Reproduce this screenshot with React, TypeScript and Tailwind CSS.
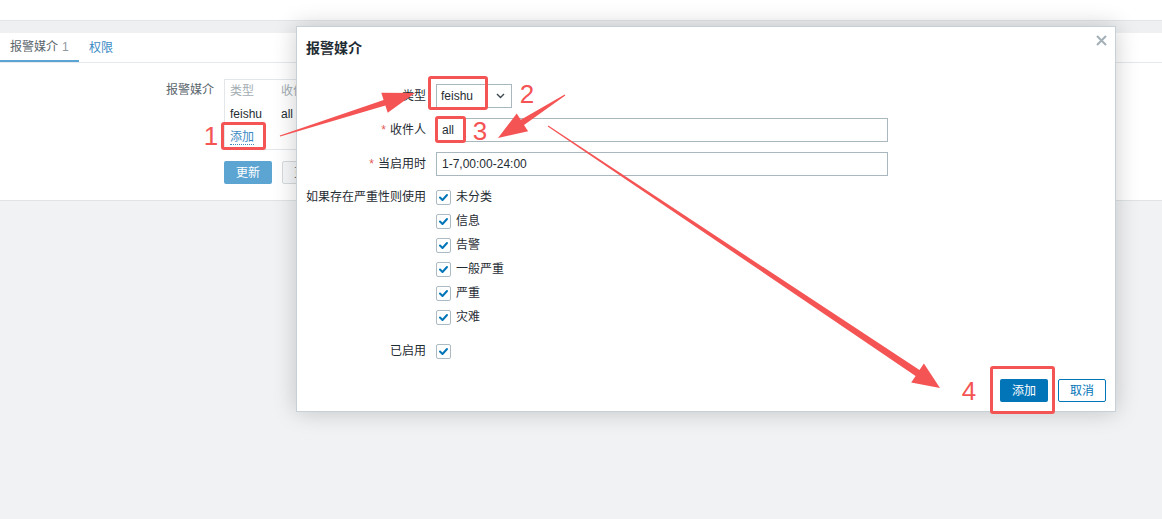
import React from 'react';

const RED = '#f55454';

// tapered arrow: thin tail, thick shaft near head, triangle head
function arrowPoints(x1: number, y1: number, x2: number, y2: number, w0: number, w1: number, headLen: number, headW: number) {
  const len = Math.hypot(x2 - x1, y2 - y1);
  const dx = (x2 - x1) / len;
  const dy = (y2 - y1) / len;
  const nx = -dy;
  const ny = dx;
  const bx = x2 - dx * headLen;
  const by = y2 - dy * headLen;
  const pts = [
    [x1 + (nx * w0) / 2, y1 + (ny * w0) / 2],
    [bx + (nx * w1) / 2, by + (ny * w1) / 2],
    [bx + (nx * headW) / 2, by + (ny * headW) / 2],
    [x2, y2],
    [bx - (nx * headW) / 2, by - (ny * headW) / 2],
    [bx - (nx * w1) / 2, by - (ny * w1) / 2],
    [x1 - (nx * w0) / 2, y1 - (ny * w0) / 2],
  ];
  return pts.map(p => `${p[0].toFixed(1)},${p[1].toFixed(1)}`).join(' ');
}

const CheckBox: React.FC = () => (
  <span className="flex h-[15px] w-[15px] items-center justify-center rounded-[2px] border border-[#acbbc3] bg-white">
    <svg width="11" height="11" viewBox="0 0 11 11" fill="none">
      <path d="M2 5.5 L4.5 8 L9 3" stroke="#0275b8" strokeWidth="2" strokeLinecap="round" strokeLinejoin="round" />
    </svg>
  </span>
);

const severities = ['未分类', '信息', '告警', '一般严重', '严重', '灾难'];

const Req: React.FC = () => <span className="mr-[4px] text-[#e45959]">*</span>;

const App: React.FC = () => {
  return (
    <div className="relative h-[519px] w-[1162px] overflow-hidden bg-[#f1f2f4] font-['Liberation_Sans','Noto_Sans_CJK_SC',sans-serif] text-[12px] text-[#1f2c33]">
      <div className="h-[21px] border-b border-[#e3e6e9] bg-white" />
      <div className="h-[12px] bg-[#eef0f2]" />

      {/* page card */}
      <div className="border-b border-[#dfe3e6] bg-white">
        <div className="flex h-[30px] border-b border-[#e6e9ec]">
          <div className="flex w-[79px] items-center border-b-2 border-[#5ba4d3] pl-[10px] text-[#5b666d]">
            报警媒介 <span className="ml-[4px] text-[#8f999f]">1</span>
          </div>
          <div className="flex items-center pl-[10px] text-[#3a8ac4]">权限</div>
        </div>
        <div className="flex pb-[16px] pt-[16px]">
          <div className="w-[214px] pt-[3px] text-right leading-[16px] text-[#5b666d]">报警媒介</div>
          <div className="ml-[10px]">
            <div className="h-[71px] w-[300px] border border-[#e3e7ea] pl-[5px]">
              <div className="flex h-[22px] items-center text-[#a3adb3]">
                <span className="w-[51px]">类型</span>
                <span>收件人</span>
              </div>
              <div className="flex h-[24px] items-center">
                <span className="w-[51px]">feishu</span>
                <span>all</span>
              </div>
              <div className="flex h-[22px] items-center">
                <span className="border-b border-dotted border-[#3a8ac4] leading-[14px] text-[#3a8ac4]">添加</span>
              </div>
            </div>
            <div className="mt-[11px] flex gap-[10px]">
              <button className="h-[23px] w-[48px] rounded-[2px] bg-[#5ca5d2] text-white">更新</button>
              <button className="h-[23px] w-[48px] rounded-[2px] border border-[#d5dadd] bg-[#f6f7f8] text-[#5b666d]">克隆</button>
            </div>
          </div>
        </div>
      </div>

      {/* dialog */}
      <div className="absolute left-[296px] top-[26px] flex h-[386px] w-[820px] flex-col border border-[#c7d0d6] bg-white shadow-[0_0_22px_rgba(0,0,0,0.2)]">
        <div className="relative pl-[9px] pt-[13px]">
          <div className="text-[14px] font-bold leading-[16px] text-[#1f2c33]">报警媒介</div>
          <button className="absolute right-[8px] top-[7px] flex h-[12px] w-[12px] items-center justify-center">
            <svg width="11" height="11" viewBox="0 0 11 11">
              <path d="M1 1 L10 10 M10 1 L1 10" stroke="#a3b0b7" strokeWidth="2" />
            </svg>
          </button>
        </div>

        <div className="mt-[28px] flex flex-col pl-[9px]">
          <div className="flex h-[24px] items-center">
            <div className="w-[120px] text-right">类型</div>
            <div className="ml-[10px] flex h-[24px] w-[76px] items-center justify-between border border-[#a9b7bf] pl-[4px] pr-[6px]">
              <span>feishu</span>
              <svg width="9" height="6" viewBox="0 0 9 6" fill="none">
                <path d="M1 1 L4.5 4.5 L8 1" stroke="#3d4a51" strokeWidth="1.4" />
              </svg>
            </div>
          </div>
          <div className="mt-[10px] flex h-[24px] items-center">
            <div className="w-[120px] text-right"><Req />收件人</div>
            <div className="ml-[10px] flex h-[24px] w-[452px] items-center border border-[#a9b7bf] pl-[5px]">all</div>
          </div>
          <div className="mt-[10px] flex h-[24px] items-center">
            <div className="w-[120px] text-right"><Req />当启用时</div>
            <div className="ml-[10px] flex h-[24px] w-[452px] items-center border border-[#a9b7bf] pl-[5px]">1-7,00:00-24:00</div>
          </div>
          <div className="mt-[9px] flex">
            <div className="w-[120px] text-right leading-[24px]">如果存在严重性则使用</div>
            <div className="ml-[10px] flex flex-col">
              {severities.map(s => (
                <div key={s} className="flex h-[24px] items-center">
                  <CheckBox />
                  <span className="ml-[5px]">{s}</span>
                </div>
              ))}
            </div>
          </div>
          <div className="mt-[10px] flex h-[24px] items-center">
            <div className="w-[120px] text-right">已启用</div>
            <div className="ml-[10px]"><CheckBox /></div>
          </div>
        </div>

        <div className="mt-auto flex justify-end gap-[10px] pb-[9px] pr-[9px]">
          <button className="h-[23px] w-[48px] rounded-[2px] bg-[#0275b8] text-white">添加</button>
          <button className="h-[23px] w-[48px] rounded-[2px] border border-[#0275b8] bg-white text-[#0275b8]">取消</button>
        </div>
      </div>

      {/* annotations */}
      <svg className="pointer-events-none absolute inset-0" width="1162" height="519" viewBox="0 0 1162 519">
        <g fill="none" stroke={RED} strokeWidth="3">
          <rect x="222.5" y="123.5" width="42" height="25" rx="1.5" />
          <rect x="429.5" y="77.5" width="57" height="31" rx="1.5" />
          <rect x="436.5" y="117.5" width="28" height="24" rx="1.5" />
          <rect x="991.5" y="367.5" width="62" height="45" rx="1.5" />
        </g>
        <g fill={RED}>
          <polygon points={arrowPoints(280, 136, 415, 93, 1, 6, 32, 21)} />
          <polygon points={arrowPoints(565, 95, 498, 138, 1, 6, 29, 21)} />
          <polygon points={arrowPoints(548, 126, 940, 388, 1, 7, 27, 23)} />
        </g>
        <g fill={RED} fontFamily="'Liberation Sans', sans-serif" fontSize="26" textAnchor="middle">
          <text x="211" y="145">1</text>
          <text x="527" y="103">2</text>
          <text x="480" y="140">3</text>
          <text x="969" y="400">4</text>
        </g>
      </svg>
    </div>
  );
};

export default App;
